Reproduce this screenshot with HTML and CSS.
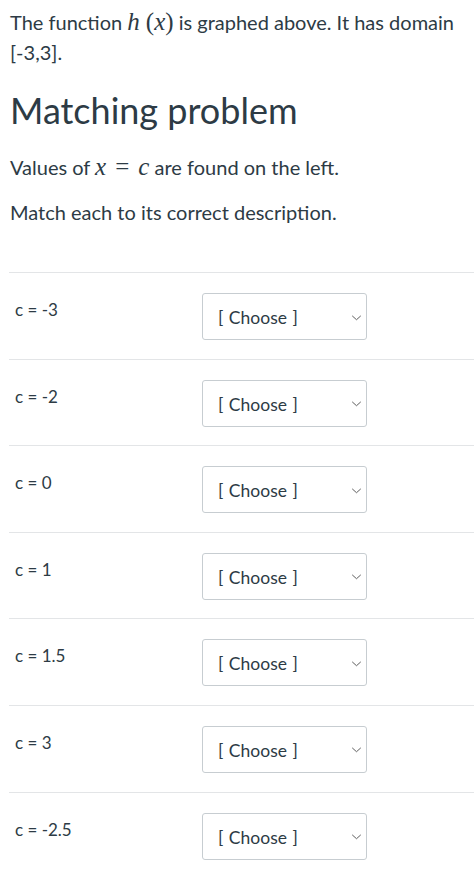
FILE: index.html
```html
<!DOCTYPE html>
<html>
<head>
<meta charset="utf-8">
<link rel="stylesheet" href="styles.css">
</head>
<body>
<div class="page">
  <p class="intro">The function <span class="math"><i>h</i><span class="gap"></span><span class="up">(</span><i>x</i><span class="up">)</span></span> is graphed above. It has domain [-3,3].</p>
  <h2 class="title">Matching problem</h2>
  <p class="para">Values of <span class="math"><i>x</i><span class="up eq">=</span><i>c</i></span> are found on the left.</p>
  <p class="para">Match each to its correct description.</p>

  <div class="rows">
    <div class="row"><div class="label">c = -3</div><div class="select"><span>[ Choose ]</span><svg class="chev" viewBox="0 0 12 7" width="11" height="6"><path d="M1 1 L6 5.5 L11 1" fill="none" stroke="#555" stroke-width="1.1"/></svg></div></div>
    <div class="row"><div class="label">c = -2</div><div class="select"><span>[ Choose ]</span><svg class="chev" viewBox="0 0 12 7" width="11" height="6"><path d="M1 1 L6 5.5 L11 1" fill="none" stroke="#555" stroke-width="1.1"/></svg></div></div>
    <div class="row"><div class="label">c = 0</div><div class="select"><span>[ Choose ]</span><svg class="chev" viewBox="0 0 12 7" width="11" height="6"><path d="M1 1 L6 5.5 L11 1" fill="none" stroke="#555" stroke-width="1.1"/></svg></div></div>
    <div class="row"><div class="label">c = 1</div><div class="select"><span>[ Choose ]</span><svg class="chev" viewBox="0 0 12 7" width="11" height="6"><path d="M1 1 L6 5.5 L11 1" fill="none" stroke="#555" stroke-width="1.1"/></svg></div></div>
    <div class="row"><div class="label">c = 1.5</div><div class="select"><span>[ Choose ]</span><svg class="chev" viewBox="0 0 12 7" width="11" height="6"><path d="M1 1 L6 5.5 L11 1" fill="none" stroke="#555" stroke-width="1.1"/></svg></div></div>
    <div class="row"><div class="label">c = 3</div><div class="select"><span>[ Choose ]</span><svg class="chev" viewBox="0 0 12 7" width="11" height="6"><path d="M1 1 L6 5.5 L11 1" fill="none" stroke="#555" stroke-width="1.1"/></svg></div></div>
    <div class="row"><div class="label">c = -2.5</div><div class="select"><span>[ Choose ]</span><svg class="chev" viewBox="0 0 12 7" width="11" height="6"><path d="M1 1 L6 5.5 L11 1" fill="none" stroke="#555" stroke-width="1.1"/></svg></div></div>
  </div>
</div>
</body>
</html>
```

FILE: styles.css
```css
html, body {
  margin: 0;
  padding: 0;
  background: #ffffff;
}
body {
  font-family: Lato, "Open Sans", sans-serif;
  color: #2d3b45;
}
.page {
  padding-left: 9px;
  overflow: hidden;
}
.intro {
  margin: 0;
  padding: 7px 0 0 1px;
  font-size: 20px;
  line-height: 30px;
}
.math {
  white-space: nowrap;
}
.math i {
  font-family: "Liberation Serif", serif;
  font-size: 1.25em;
  font-style: italic;
}
.math .up {
  font-family: "Liberation Serif", serif;
  font-size: 1.25em;
}
.math .gap {
  display: inline-block;
  width: 6px;
}
.math .eq {
  display: inline-block;
  padding: 0 9px;
}
.title {
  margin: 23px 0 0 0;
  padding-left: 1px;
  font-size: 36px;
  font-weight: 400;
  line-height: 40px;
}
.para {
  margin: 23px 0 0 0;
  padding-left: 1px;
  font-size: 20px;
  line-height: 28px;
}
.para + .para {
  margin-top: 17px;
}
.rows {
  margin-top: 46px;
}
.row {
  display: grid;
  grid-template-columns: 193px 165px;
  border-top: 1px solid #e3e5e7;
  padding: 20px 0 20px 0;
  height: 86.6px;
  box-sizing: border-box;
}
.label {
  padding: 7px 0 0 6px;
  font-size: 17px;
  line-height: 20px;
}
.select {
  box-sizing: border-box;
  height: 47px;
  border: 1px solid #c7cdd1;
  border-radius: 3px;
  display: flex;
  align-items: center;
  justify-content: space-between;
  padding: 2px 4px 0 15px;
  font-size: 17.5px;
  word-spacing: 1px;
}
.chev {
  display: block;
}
```
